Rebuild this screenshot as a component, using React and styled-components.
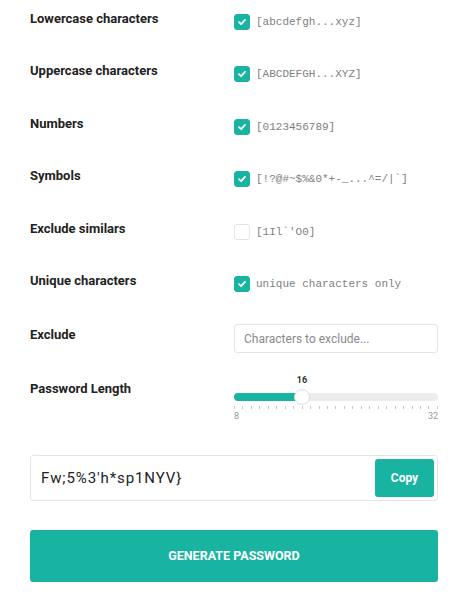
import React, {useState} from 'react'
import styled, {createGlobalStyle} from 'styled-components'

const GlobalStyle = createGlobalStyle`
  * {
    box-sizing: border-box;
  }
  body {
    margin: 0;
    background: #fff;
    font-family: Roboto, "Liberation Sans", sans-serif;
  }
`

const TEAL = '#19b4a1'

const options = [
    {label: 'Lowercase characters', hint: '[abcdefgh...xyz]', on: true},
    {label: 'Uppercase characters', hint: '[ABCDEFGH...XYZ]', on: true},
    {label: 'Numbers', hint: '[0123456789]', on: true},
    {label: 'Symbols', hint: '[!?@#~$%&0*+-_...^=/|`]', on: true},
    {label: 'Exclude similars', hint: "[1Il`'O0]", on: false},
    {label: 'Unique characters', hint: 'unique characters only', on: true},
]

const Check = () => (
    <svg width="10" height="10" viewBox="0 0 10 10">
        <path d="M2 5.2 L4.1 7.2 L8 2.9" fill="none" stroke="#fff" strokeWidth="1.8" strokeLinecap="round" strokeLinejoin="round" />
    </svg>
)

const App = () => {
    const [checks, setChecks] = useState(options.map(o => o.on))
    const length = 16
    const min = 8
    const max = 32
    const pct = ((length - min) / (max - min)) * 100

    const toggle = i => {
        setChecks(checks.map((c, j) => (j === i ? !c : c)))
    }

    return (
        <Page>
            <GlobalStyle />
            {options.map((o, i) => (
                <Row key={o.label}>
                    <Label>{o.label}</Label>
                    <Control onClick={() => toggle(i)}>
                        <Box checked={checks[i]}>{checks[i] && <Check />}</Box>
                        <Hint>{o.hint}</Hint>
                    </Control>
                </Row>
            ))}
            <ExcludeRow>
                <Label>Exclude</Label>
                <TextInput placeholder="Characters to exclude..." />
            </ExcludeRow>
            <LengthRow>
                <Label>Password Length</Label>
                <Slider>
                    <Track>
                        <Fill style={{width: pct + '%'}} />
                        <Thumb style={{left: pct + '%'}}>
                            <Value>{length}</Value>
                        </Thumb>
                    </Track>
                    <Ticks>
                        {Array.from({length: max - min + 1}).map((_, i) => (
                            <Tick key={i} />
                        ))}
                    </Ticks>
                    <Bounds>
                        <span>{min}</span>
                        <span>{max}</span>
                    </Bounds>
                </Slider>
            </LengthRow>
            <Output>
                <Password>Fw;5%3'h*sp1NYV&#125;</Password>
                <CopyButton>Copy</CopyButton>
            </Output>
            <Generate>GENERATE PASSWORD</Generate>
        </Page>
    )
}

const Page = styled.div`
    width: 468px;
    padding: 0 30px;
    display: flex;
    flex-direction: column;
`

const Row = styled.div`
    display: grid;
    grid-template-columns: 204px 204px;
    height: 52.4px;
    align-items: start;
`

const Label = styled.div`
    font-size: 13px;
    font-weight: 700;
    line-height: 16px;
    color: #222;
    padding-top: 11px;
`

const Control = styled.label`
    display: flex;
    align-items: center;
    gap: 6px;
    margin-top: 14px;
    cursor: pointer;
`

const Box = styled.span`
    width: 16px;
    height: 16px;
    border-radius: 3px;
    display: flex;
    align-items: center;
    justify-content: center;
    background: ${props => (props.checked ? TEAL : '#fff')};
    border: 1px solid ${props => (props.checked ? TEAL : '#e2e2e2')};
`

const Hint = styled.span`
    font-family: "Liberation Mono", "DejaVu Sans Mono", monospace;
    font-size: 11px;
    line-height: 16px;
    color: #808080;
`

const ExcludeRow = styled.div`
    display: grid;
    grid-template-columns: 204px 204px;
    align-items: start;
    height: 54px;
    padding-top: 2px;
`

const TextInput = styled.input`
    height: 29px;
    width: 204px;
    margin-top: 8px;
    border: 1px solid #e4e4e4;
    border-radius: 3px;
    padding: 0 9px;
    font-family: Roboto, "Liberation Sans", sans-serif;
    font-size: 12px;
    color: #333;
    outline: none;

    &::placeholder {
        color: #8a8a8a;
    }
`

const LengthRow = styled.div`
    display: grid;
    grid-template-columns: 204px 204px;
    align-items: start;
    height: 86.6px;
    padding-top: 2px;
`

const Slider = styled.div`
    padding-top: 23px;
`

const Track = styled.div`
    position: relative;
    height: 8px;
    border-radius: 4px;
    background: #ececec;
`

const Fill = styled.div`
    height: 100%;
    border-radius: 4px;
    background: ${TEAL};
`

const Thumb = styled.div`
    position: absolute;
    top: 50%;
    width: 16px;
    height: 16px;
    margin: -8px 0 0 -8px;
    border-radius: 50%;
    background: #fff;
    border: 1px solid #dedede;
`

const Value = styled.span`
    position: absolute;
    bottom: 19px;
    left: 50%;
    transform: translateX(-50%);
    font-size: 9px;
    font-weight: 700;
    color: #333;
`

const Ticks = styled.div`
    display: flex;
    justify-content: space-between;
    margin-top: 5px;
`

const Tick = styled.span`
    width: 1px;
    height: 3px;
    background: #c8c8c8;
`

const Bounds = styled.div`
    display: flex;
    justify-content: space-between;
    margin-top: 2px;
    font-size: 9px;
    color: #9a9a9a;
`

const Output = styled.div`
    display: flex;
    align-items: center;
    justify-content: space-between;
    height: 46px;
    border: 1px solid #e6e6e6;
    border-radius: 3px;
    padding: 0 3px 0 10px;
`

const Password = styled.span`
    font-size: 15px;
    letter-spacing: 0.9px;
    color: #222;
`

const CopyButton = styled.button`
    width: 59px;
    height: 38px;
    border: none;
    border-radius: 3px;
    background: ${TEAL};
    color: #fff;
    font-family: Roboto, "Liberation Sans", sans-serif;
    font-size: 12px;
    font-weight: 700;
    cursor: pointer;
`

const Generate = styled.button`
    margin-top: 29px;
    height: 52px;
    border: none;
    border-radius: 3px;
    background: ${TEAL};
    color: #fff;
    font-family: Roboto, "Liberation Sans", sans-serif;
    font-size: 12.5px;
    font-weight: 700;
    cursor: pointer;
`

export default App
